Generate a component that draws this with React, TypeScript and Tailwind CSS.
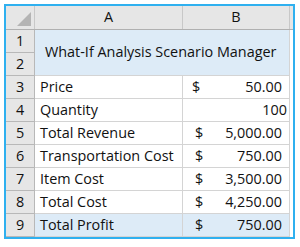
const rows = [
  { n: 3, label: "Price", dollar: true, value: "50.00", shift: true },
  { n: 4, label: "Quantity", dollar: false, value: "100" },
  { n: 5, label: "Total Revenue", dollar: true, value: "5,000.00" },
  { n: 6, label: "Transportation Cost", dollar: true, value: "750.00" },
  { n: 7, label: "Item Cost", dollar: true, value: "3,500.00" },
  { n: 8, label: "Total Cost", dollar: true, value: "4,250.00" },
  { n: 9, label: "Total Profit", dollar: true, value: "750.00", fill: true },
];

const RowNum = ({ n }: { n?: number }) => (
  <div className="flex items-center justify-center h-[23px] bg-[#e6e6e6] border-r border-b border-[#b8b8b8]">
    {n}
  </div>
);

export default function App() {
  return (
    <div className="w-[300px] h-[247px] bg-white p-1 text-[14.4px] leading-none text-[#111] font-['Open_Sans',sans-serif]">
      <div className="w-[291px] border-2 border-[#2fb0ef] bg-white">
        {/* column headers */}
        <div className="grid grid-cols-[29px_148px_107px_3px] h-[24px] bg-[#e6e6e6] border-b border-[#b0b0b0]">
          <div className="relative border-r border-[#c8c8c8]">
            <svg className="absolute right-[3px] bottom-[3px]" width="14" height="14" viewBox="0 0 14 14">
              <polygon points="14,0 14,14 0,14" fill="#b4b4b4" />
            </svg>
          </div>
          <div className="flex items-center justify-center border-r border-[#c8c8c8]">A</div>
          <div className="flex items-center justify-center border-r border-[#c8c8c8]">B</div>
          <div />
        </div>

        {/* merged title rows 1-2 */}
        <div className="grid grid-cols-[29px_255px_3px]">
          <div className="flex flex-col">
            <RowNum n={1} />
            <RowNum n={2} />
          </div>
          <div className="flex items-center pl-[10px] bg-[#ddebf7] border-r border-b border-[#d4d4d4]">
            What-If Analysis Scenario Manager
          </div>
          <div />
        </div>

        {rows.map((r) => (
          <div key={r.n} className="grid grid-cols-[29px_148px_107px_3px] h-[23px]">
            <RowNum n={r.n} />
            <div
              className={`flex items-center pl-[5px] border-r border-b border-[#d4d4d4] ${
                r.fill ? "bg-[#ddebf7]" : ""
              }`}
            >
              {r.label}
            </div>
            <div
              className={`flex items-center justify-between border-r border-b border-[#d4d4d4] ${
                r.fill ? "bg-[#ddebf7]" : ""
              } ${r.dollar ? (r.shift ? "pl-[9px] pr-[7px]" : "pl-[12px] pr-[7px]") : "pr-[2px]"}`}
            >
              <span>{r.dollar ? "$" : ""}</span>
              <span>{r.value}</span>
            </div>
            <div />
          </div>
        ))}
      </div>
    </div>
  );
}
